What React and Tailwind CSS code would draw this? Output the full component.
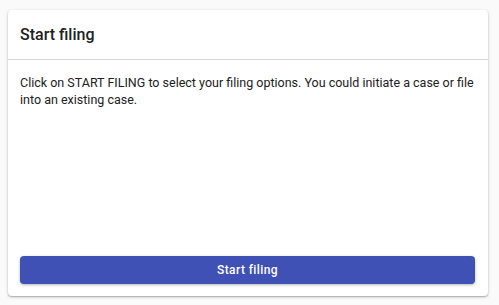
export default function App() {
    return (
        <div className="min-h-[305px] bg-[#fafafa] pt-[10px] pl-2" style={{ fontFamily: 'Roboto, "Noto Sans", sans-serif' }}>
            {/* Card */}
            <div className="w-[480px] h-[286px] bg-white rounded-[4px] shadow-[0_1px_3px_rgba(0,0,0,0.25),0_1px_1px_rgba(0,0,0,0.14)] flex flex-col">
                {/* Header */}
                <div className="h-[50px] px-3 flex items-center border-b border-[#d6d6d6]">
                    <h2 className="text-[16px] font-medium text-[#212121]">Start filing</h2>
                </div>

                {/* Body */}
                <div className="flex-1 flex flex-col px-3 pt-[14px] pb-3">
                    <p className="text-[12.5px] leading-[17px] text-[#212121]">
                        Click on START FILING to select your filing options. You could initiate a case or file into an existing case.
                    </p>
                    <button className="mt-auto h-[28px] w-[455px] rounded-[4px] bg-[#3f51b5] text-white text-[12px] font-medium tracking-[0.4px] shadow-[0_1px_3px_rgba(0,0,0,0.3)]">
                        Start filing
                    </button>
                </div>
            </div>
        </div>
    );
}
